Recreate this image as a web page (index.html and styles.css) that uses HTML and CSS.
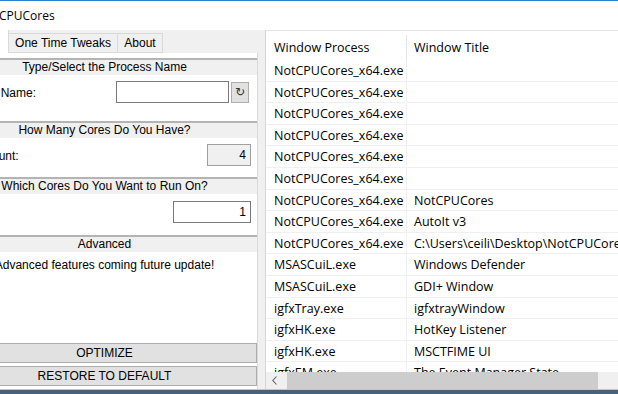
FILE: index.html
```html
<!DOCTYPE html>
<html lang="en">

    <head>
        <meta charset="UTF-8">
        <meta name="viewport" content="width=device-width, initial-scale=1.0">
        <title>NotCPUCores</title>
        <link rel="stylesheet" href="styles.css">
    </head>

    <body>
        <div class="window">
            <div class="titlebar"><span class="title">CPUCores</span></div>

            <div class="client">
                <!-- left: tabbed settings -->
                <div class="left">
                    <div class="tabs">
                        <div class="tab tab-main"></div>
                        <div class="tab tab-tweaks">One Time Tweaks</div>
                        <div class="tab tab-about">About</div>
                    </div>
                    <div class="panel">
                        <div class="group-title">Type/Select the Process Name</div>
                        <div class="row row-name">
                            <label class="row-label" for="process">Process Name:</label>
                            <input class="field field-name" type="text" id="process">
                            <button class="refresh">&#8635;</button>
                        </div>

                        <div class="group-title group-cores">How Many Cores Do You Have?</div>
                        <div class="row row-count">
                            <label class="row-label" for="count">Core Count:</label>
                            <input class="field field-count" type="text" id="count" value="4" disabled>
                        </div>

                        <div class="group-title group-run">Which Cores Do You Want to Run On?</div>
                        <div class="row row-run">
                            <input class="field field-run" type="text" id="runon" value="1">
                        </div>

                        <div class="group-title group-adv">Advanced</div>
                        <p class="note">Advanced features coming future update!</p>

                        <div class="actions">
                            <button class="action">OPTIMIZE</button>
                            <button class="action">RESTORE TO DEFAULT</button>
                        </div>
                    </div>
                </div>

                <!-- right: window list -->
                <div class="list">
                    <div class="list-head">
                        <div class="cell cell-proc">Window Process</div>
                        <div class="cell cell-title">Window Title</div>
                    </div>
                    <div class="list-body">
                        <div class="list-row"><div class="cell cell-proc">NotCPUCores_x64.exe</div><div class="cell cell-title"></div></div>
                        <div class="list-row"><div class="cell cell-proc">NotCPUCores_x64.exe</div><div class="cell cell-title"></div></div>
                        <div class="list-row"><div class="cell cell-proc">NotCPUCores_x64.exe</div><div class="cell cell-title"></div></div>
                        <div class="list-row"><div class="cell cell-proc">NotCPUCores_x64.exe</div><div class="cell cell-title"></div></div>
                        <div class="list-row"><div class="cell cell-proc">NotCPUCores_x64.exe</div><div class="cell cell-title"></div></div>
                        <div class="list-row"><div class="cell cell-proc">NotCPUCores_x64.exe</div><div class="cell cell-title"></div></div>
                        <div class="list-row"><div class="cell cell-proc">NotCPUCores_x64.exe</div><div class="cell cell-title">NotCPUCores</div></div>
                        <div class="list-row"><div class="cell cell-proc">NotCPUCores_x64.exe</div><div class="cell cell-title">AutoIt v3</div></div>
                        <div class="list-row"><div class="cell cell-proc">NotCPUCores_x64.exe</div><div class="cell cell-title">C:\Users\ceili\Desktop\NotCPUCores</div></div>
                        <div class="list-row"><div class="cell cell-proc">MSASCuiL.exe</div><div class="cell cell-title">Windows Defender</div></div>
                        <div class="list-row"><div class="cell cell-proc">MSASCuiL.exe</div><div class="cell cell-title">GDI+ Window</div></div>
                        <div class="list-row"><div class="cell cell-proc">igfxTray.exe</div><div class="cell cell-title">igfxtrayWindow</div></div>
                        <div class="list-row"><div class="cell cell-proc">igfxHK.exe</div><div class="cell cell-title">HotKey Listener</div></div>
                        <div class="list-row"><div class="cell cell-proc">igfxHK.exe</div><div class="cell cell-title">MSCTFIME UI</div></div>
                        <div class="list-row"><div class="cell cell-proc">igfxEM.exe</div><div class="cell cell-title">The Event Manager State</div></div>
                    </div>
                    <div class="hscroll">
                        <div class="hscroll-arrow">
                            <svg width="5" height="9" viewBox="0 0 5 9"><polyline points="4.5,0.5 0.8,4.5 4.5,8.5" fill="none" stroke="#606060" stroke-width="1.1"/></svg>
                        </div>
                        <div class="hscroll-thumb"></div>
                    </div>
                </div>
            </div>

            <div class="taskbar-edge"></div>
        </div>
    </body>

</html>
```

FILE: styles.css
```css
* {
    box-sizing: border-box;
}

body {
    margin: 0;
    width: 618px;
    height: 394px;
    overflow: hidden;
    font-family: "Liberation Sans", Arial, sans-serif;
    font-size: 12px;
    color: #000;
    background-color: #f0f0f0;
}

.window {
    display: flex;
    flex-direction: column;
    height: 394px;
    overflow: hidden;
}

.titlebar {
    flex: none;
    height: 30px;
    background-color: #fff;
    border-top: 1px solid #2e80d3;
    display: flex;
    align-items: center;
    font-family: "Open Sans", sans-serif;
    font-size: 12px;
}

.title {
    margin-left: -1px;
}

.client {
    flex: none;
    height: 359px;
    display: flex;
    background-color: #f0f0f0;
}

/* left side */

.left {
    flex: none;
    width: 306px;
    margin-left: -48px;
    display: flex;
    flex-direction: column;
}

.tabs {
    display: flex;
    align-items: flex-end;
    height: 23px;
}

.tab {
    height: 20px;
    line-height: 18px;
    text-align: center;
    background-color: #f0f0f0;
    border: 1px solid #d9d9d9;
    border-left: none;
}

.tab-main {
    width: 57px;
    height: 23px;
    background-color: #fff;
    border-top: none;
    border-bottom: none;
}

.tab-tweaks {
    width: 109px;
}

.tab-about {
    width: 45px;
}

.panel {
    flex: 1;
    display: flex;
    flex-direction: column;
    background-color: #fff;
    border-right: 1px solid #d9d9d9;
    padding: 5px 0 3px;
}

.group-title {
    height: 17px;
    line-height: 15px;
    text-align: center;
    background-color: #f0f0f0;
    border-top: 2px solid #b4b4b4;
}

.group-cores {
    margin-top: 18px;
}

.group-run {
    margin-top: 11px;
}

.group-adv {
    margin-top: 12px;
}

.row {
    display: flex;
    align-items: center;
    height: 22px;
    padding: 0 6px 0 2px;
}

.row-name {
    margin-top: 6px;
    padding-right: 8px;
}

.row-count {
    margin-top: 6px;
}

.row-run {
    margin-top: 7px;
    justify-content: flex-end;
}

.row-label {
    flex: 1;
    margin-top: 2px;
}

.field {
    height: 22px;
    padding: 0 4px;
    border: 1px solid #7a7a7a;
    background-color: #fff;
    font-family: inherit;
    font-size: 12px;
    color: #000;
    text-align: right;
}

.field-name {
    width: 113px;
}

.field-count {
    width: 44px;
    background-color: #f0f0f0;
    border-color: #a0a0a0;
}

.field-run {
    width: 78px;
}

.refresh {
    width: 18px;
    height: 21px;
    margin-left: 2px;
    padding: 0;
    border: 1px solid #adadad;
    background-color: #e1e1e1;
    font-family: "DejaVu Sans", sans-serif;
    font-size: 12px;
    color: #333;
}

.note {
    margin: 6px 0 0;
    line-height: 14px;
    text-align: center;
}

.actions {
    margin-top: auto;
    display: flex;
    flex-direction: column;
    gap: 3px;
}

.action {
    height: 20px;
    padding: 0;
    border: 1px solid #adadad;
    background-color: #e1e1e1;
    font-family: inherit;
    font-size: 12px;
    color: #000;
}

/* right side */

.list {
    flex: 1;
    min-width: 0;
    margin-left: 7px;
    display: flex;
    flex-direction: column;
    background-color: #fff;
    border-left: 1px solid #d5d5d5;
    border-top: 1px solid #e3e3e3;
    overflow: hidden;
    font-family: "Open Sans", sans-serif;
    font-size: 12.5px;
    white-space: nowrap;
}

.list-head {
    flex: none;
    display: flex;
    height: 29px;
    padding-top: 4px;
}

.list-head .cell {
    line-height: 25px;
    border-right-color: #e5e5e5;
}

.list-body {
    flex: 1;
    overflow: hidden;
}

.list-row {
    display: flex;
    height: 21.6px;
    border-bottom: 1px solid #f0f0f0;
}

.cell {
    line-height: 22px;
    border-right: 1px solid #f0f0f0;
}

.cell-proc {
    flex: none;
    width: 141px;
    padding-left: 8px;
}

.cell-title {
    flex: none;
    width: 400px;
    padding-left: 7px;
}

.hscroll {
    flex: none;
    display: flex;
    height: 17px;
    background-color: #f0f0f0;
}

.hscroll-arrow {
    width: 17px;
    display: flex;
    align-items: center;
    justify-content: center;
}

.hscroll-thumb {
    width: 311px;
    margin-left: 4px;
    background-color: #cdcdcd;
}

.taskbar-edge {
    flex: none;
    height: 5px;
    border-top: 1px solid #c5c5c5;
    background-color: #46627f;
}
```
